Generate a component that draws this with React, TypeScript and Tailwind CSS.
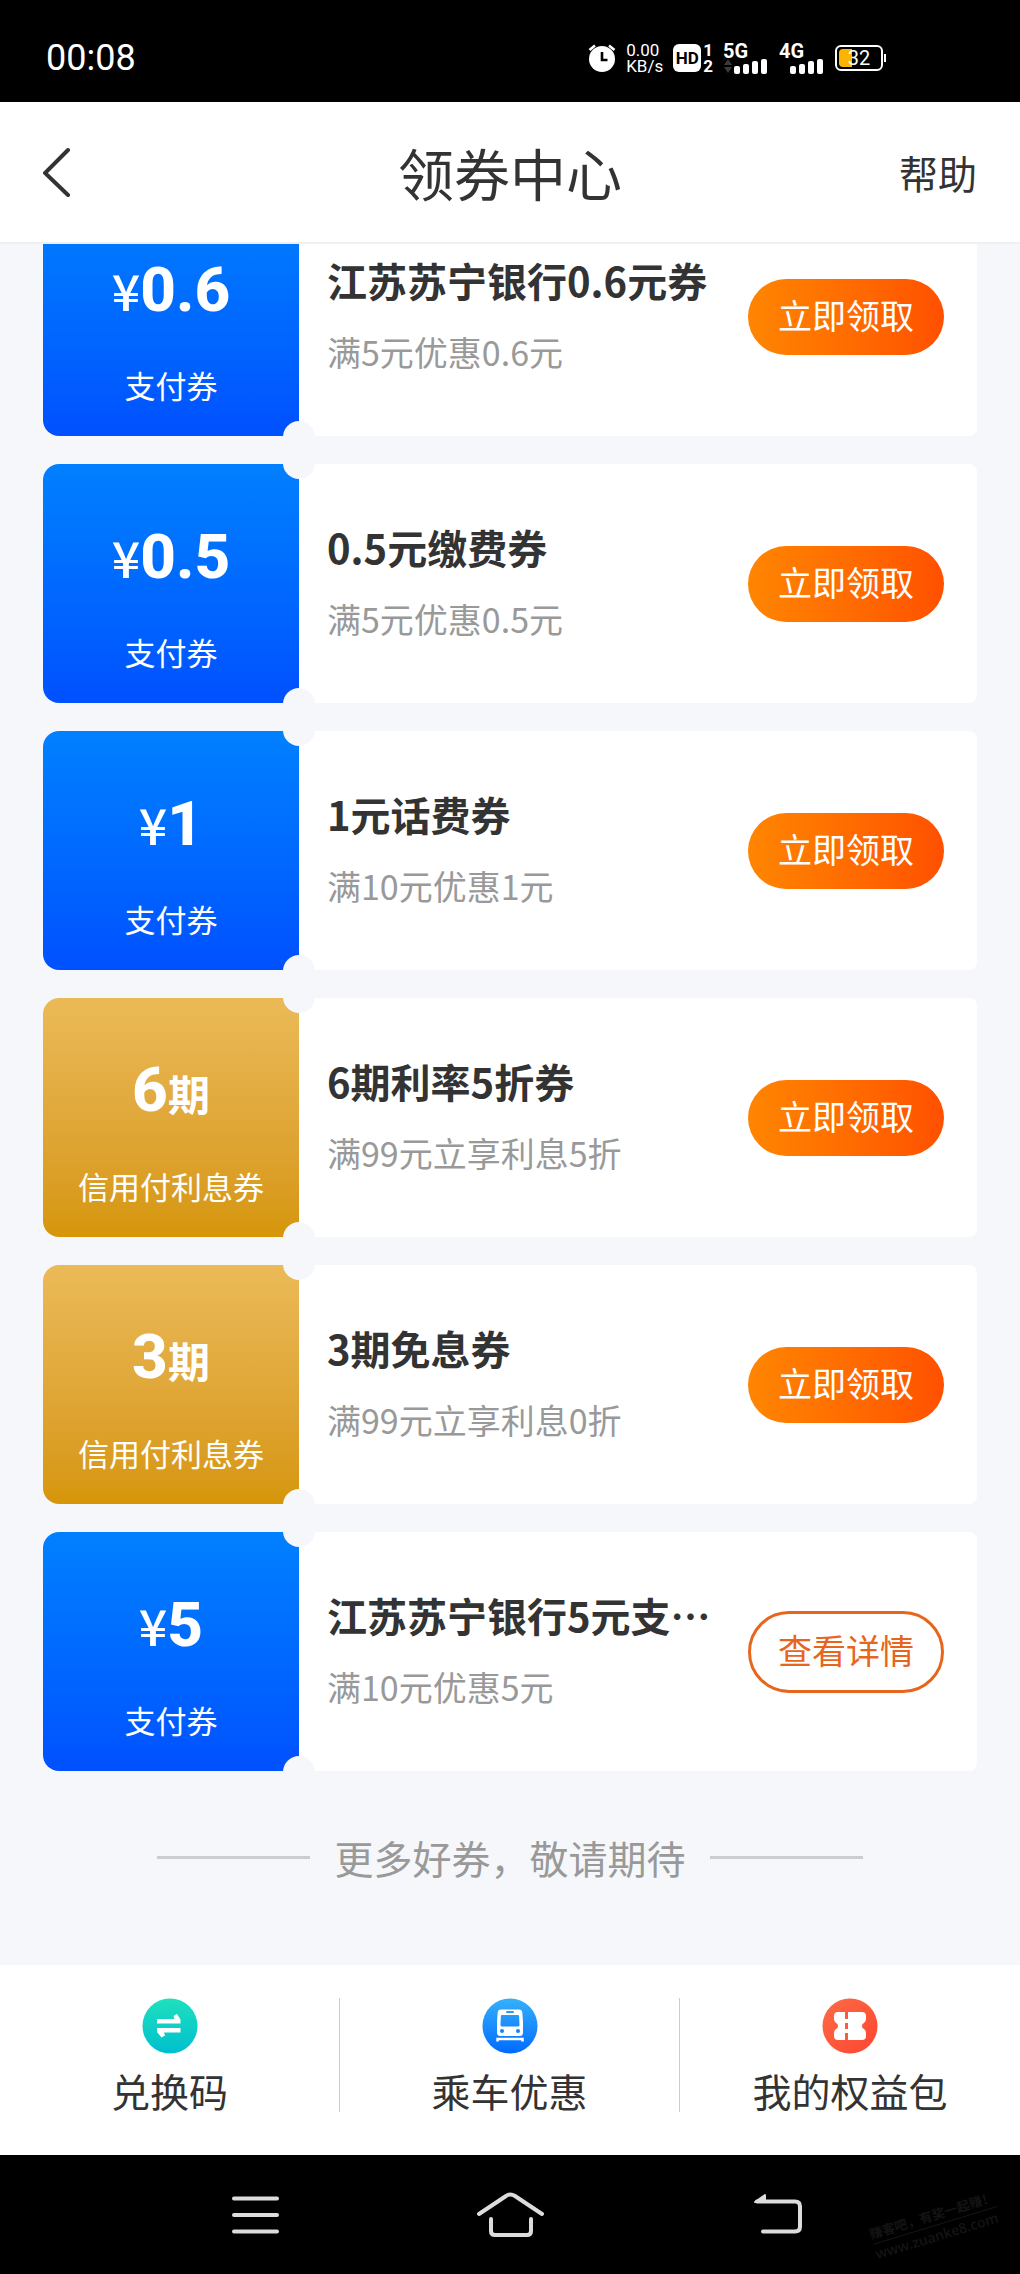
import React from 'react'

type Coupon = {
  id: number
  tone: 'blue' | 'gold'
  value: string
  prefix?: string
  suffix?: string
  kind: string
  title: string
  desc: string
  claimed?: boolean
}

const COUPONS: Coupon[] = [
  { id: 1, tone: 'blue', prefix: '¥', value: '0.6', kind: '支付券', title: '江苏苏宁银行0.6元券', desc: '满5元优惠0.6元' },
  { id: 2, tone: 'blue', prefix: '¥', value: '0.5', kind: '支付券', title: '0.5元缴费券', desc: '满5元优惠0.5元' },
  { id: 3, tone: 'blue', prefix: '¥', value: '1', kind: '支付券', title: '1元话费券', desc: '满10元优惠1元' },
  { id: 4, tone: 'gold', value: '6', suffix: '期', kind: '信用付利息券', title: '6期利率5折券', desc: '满99元立享利息5折' },
  { id: 5, tone: 'gold', value: '3', suffix: '期', kind: '信用付利息券', title: '3期免息券', desc: '满99元立享利息0折' },
  { id: 6, tone: 'blue', prefix: '¥', value: '5', kind: '支付券', title: '江苏苏宁银行5元支付券', desc: '满10元优惠5元', claimed: true },
]

const TONES = {
  blue: 'bg-linear-to-b from-[#0080ff] to-[#0050ff]',
  gold: 'bg-linear-to-b from-[#ebba57] to-[#d69606]',
}

function Signal({ label, data }: { label: string; data?: boolean }) {
  return (
    <div className="flex w-[46px] flex-col">
      <span className="text-[20px] leading-4 font-bold">{label}</span>
      <svg className="h-[15px] w-[46px]" viewBox="0 0 46 15" fill="#fff">
        {data ? <path d="M1 6 5 0l4 6zM1 8h8l-4 6z" fill="#3a3a3a" /> : null}
        <rect x="11" y="7" width="6" height="8" rx="2" />
        <rect x="20" y="5" width="6" height="10" rx="2" />
        <rect x="29" y="2" width="6" height="13" rx="2" />
        <rect x="38" y="0" width="6" height="15" rx="2" />
      </svg>
    </div>
  )
}

function StatusBar() {
  return (
    <div className="flex h-[102px] items-center justify-between bg-black pt-3.5 pr-[134px] pl-[46px] font-['Roboto',sans-serif] text-white">
      <time className="text-[36px] leading-10">00:08</time>
      <div className="flex items-center gap-2.5">
        <svg className="h-7 w-7" viewBox="0 0 28 28" fill="none">
          <circle cx="14" cy="15" r="13" fill="#fff" />
          <path d="M1.500 6 7 1.500M26.500 6 21 1.500" stroke="#fff" strokeWidth="2.600" />
          <path d="M14 8v8h5.500" stroke="#000" strokeWidth="2.600" />
        </svg>
        <div className="flex flex-col text-[17px] leading-4">
          <span>0.00</span>
          <span>KB/s</span>
        </div>
        <div className="flex items-center gap-0.5">
          <span className="flex h-7 w-7 items-center justify-center rounded-md bg-white text-[17px] leading-7 font-bold text-black">HD</span>
          <span className="flex flex-col text-[17px] leading-4 font-bold">
            <span>1</span>
            <span>2</span>
          </span>
        </div>
        <Signal label="5G" data />
        <Signal label="4G" />
        <div className="flex items-center gap-px">
          <div className="relative flex h-[26px] w-12 items-center justify-center rounded-md border-2 border-white">
            <span className="absolute top-0.5 bottom-0.5 left-0.5 w-[13px] rounded-l-sm bg-[#fbb400]" />
            <span className="relative text-[20px] leading-[22px]">32</span>
          </div>
          <span className="h-2 w-0.5 bg-white" />
        </div>
      </div>
    </div>
  )
}

function CouponCard({ coupon }: { coupon: Coupon }) {
  return (
    <li className="relative flex h-[239px] overflow-hidden rounded-l-2xl rounded-r-lg bg-white">
      <div className={`flex w-64 shrink-0 flex-col items-center gap-11 pt-15 text-white ${TONES[coupon.tone]}`}>
        <div className="flex h-16 items-baseline leading-[64px] font-bold">
          {coupon.prefix ? <span className="text-[50px] font-medium">{coupon.prefix}</span> : null}
          <span className="font-['Roboto',sans-serif] text-[62px] font-extrabold">{coupon.value}</span>
          {coupon.suffix ? <span className="text-[42px]">{coupon.suffix}</span> : null}
        </div>
        <span className="text-[31px] leading-10">{coupon.kind}</span>
      </div>
      <span className="absolute -top-[17px] left-60 h-8 w-8 rounded-full bg-[#f5f7fb]" />
      <span className="absolute -bottom-[17px] left-60 h-8 w-8 rounded-full bg-[#f5f7fb]" />
      <div className="flex min-w-0 flex-1 flex-col justify-center gap-5 pr-8 pb-1.5 pl-7">
        <h2 className="truncate text-[40px] leading-[56px] font-bold text-[#333]">{coupon.title}</h2>
        <p className="text-[34px] leading-[48px] text-[#999]">{coupon.desc}</p>
      </div>
      <div className="flex shrink-0 items-center pr-[33px]">
        {coupon.claimed ? (
          <button type="button" className="h-[82px] w-[196px] rounded-full border-3 border-[#e8651c] pb-1 text-[34px] leading-[48px] text-[#e8651c]">
            查看详情
          </button>
        ) : (
          <button type="button" className="h-[76px] w-[196px] rounded-full bg-linear-to-r from-[#ff8500] to-[#ff5000] pb-1 text-[34px] leading-[48px] text-white">
            立即领取
          </button>
        )}
      </div>
    </li>
  )
}

function SwapIcon() {
  return (
    <svg className="h-14 w-14" viewBox="0 0 56 56">
      <defs>
        <linearGradient id="swap" x1="0" y1="0" x2="0" y2="1">
          <stop stopColor="#1fe0bd" />
          <stop offset="1" stopColor="#00bfcf" />
        </linearGradient>
      </defs>
      <circle cx="28" cy="28" r="27.500" fill="url(#swap)" />
      <path d="M15 21h17.500L31.500 18l3.500-2 3.500 5.500v4H15zM38.500 34.500H22l1 3-3.500 2L15 34v-4h23.500z" fill="#fff" />
    </svg>
  )
}

function TrainIcon() {
  return (
    <svg className="h-14 w-14" viewBox="0 0 56 56">
      <defs>
        <linearGradient id="train" x1="0" y1="0" x2="0" y2="1">
          <stop stopColor="#36b0fb" />
          <stop offset="1" stopColor="#006bff" />
        </linearGradient>
      </defs>
      <circle cx="28" cy="28" r="27.500" fill="url(#train)" />
      <path
        d="M19 11.500h18q3 0 3.300 3l.7 9v11q0 3.500-3.500 3.500h-19Q15 38 15 34.500v-11l.7-9q.3-3 3.300-3zM20 17q-1 0-1.100 1L18.500 27q0 1.500 1.500 1.500h16q1.500 0 1.500-1.500L37.100 18q-.1-1-1.100-1z"
        fill="#fff"
        fillRule="evenodd"
      />
      <path d="M25 14h6" stroke="#2a9afd" strokeWidth="2" strokeLinecap="round" />
      <circle cx="20" cy="33" r="2" fill="#1183ff" />
      <circle cx="36" cy="33" r="2" fill="#1183ff" />
      <path d="M15.500 43.500V41h25v2.500" fill="none" stroke="#fff" strokeWidth="2.500" />
    </svg>
  )
}

function TicketIcon() {
  return (
    <svg className="h-14 w-14" viewBox="0 0 56 56">
      <defs>
        <linearGradient id="ticket" x1="0" y1="0" x2="1" y2="1">
          <stop stopColor="#fd6c45" />
          <stop offset="1" stopColor="#fd4531" />
        </linearGradient>
      </defs>
      <circle cx="28" cy="28" r="27.500" fill="url(#ticket)" />
      <path
        d="M16 14h24q4 0 4 4v3q0 2.500-2 4-2 .5-2 3t2 3q2 1.500 2 4v3q0 4-4 4H16q-4 0-4-4v-3q0-2.500 2-4 2-.5 2-3t-2-3q-2-1.500-2-4v-3q0-4 4-4z"
        fill="#fff"
      />
      <path d="M24.500 14v7M24.500 25v6M24.500 35v7" stroke="#fd5a3c" strokeWidth="3" />
    </svg>
  )
}

const TABS = [
  { label: '兑换码', icon: SwapIcon },
  { label: '乘车优惠', icon: TrainIcon },
  { label: '我的权益包', icon: TicketIcon },
]

function SystemNav() {
  return (
    <div className="relative grid h-[119px] grid-cols-3 items-center overflow-hidden bg-black px-32">
      <button type="button" aria-label="最近任务" className="flex justify-center">
        <svg className="h-12 w-[68px]" viewBox="0 0 68 48" stroke="#dcdcdc" strokeWidth="4" strokeLinecap="round">
          <path d="M13 7.500h43M13 24h43M13 40.500h43" />
        </svg>
      </button>
      <button type="button" aria-label="主页" className="flex justify-center">
        <svg className="h-12 w-[68px]" viewBox="0 0 68 48" fill="none" stroke="#dcdcdc" strokeWidth="4" strokeLinecap="round">
          <path d="M3 23 30 5q4-3 9 0l27 18" />
          <path d="M15 28v12q0 4 4 4h32q4 0 4-4V28" />
        </svg>
      </button>
      <button type="button" aria-label="返回" className="flex justify-center">
        <svg className="h-12 w-[80px]" viewBox="0 0 80 48" fill="none" stroke="#dcdcdc" strokeWidth="4" strokeLinecap="round">
          <path d="M32 10.500h38q5 0 5 5v20q0 5-5 5H38" />
          <path d="M30 11 40 4v7z" fill="#dcdcdc" strokeWidth="2" strokeLinejoin="round" />
        </svg>
      </button>
      <div className="absolute right-5 bottom-7 flex -rotate-17 flex-col text-[#141414]">
        <span className="border-b border-[#141414] text-[13px] leading-5 font-bold">赚客吧，有奖一起赚！</span>
        <span className="font-['Open_Sans',sans-serif] text-[14px] leading-5 font-semibold">www.zuanke8.com</span>
      </div>
    </div>
  )
}

export default function App() {
  return (
    <div className="flex min-h-screen flex-col bg-[#f5f7fb] font-['Noto_Sans_CJK_SC',sans-serif] text-[#333]">
      <StatusBar />

      <header className="grid h-[142px] grid-cols-[1fr_auto_1fr] items-center border-b-2 border-[#eef0f2] bg-white px-[43px]">
        <button type="button" aria-label="返回上一页" className="justify-self-start">
          <svg className="h-[50px] w-7" viewBox="0 0 28 50" fill="none" stroke="#333" strokeWidth="4" strokeLinecap="round">
            <path d="M25 3 2 26l23 22" />
          </svg>
        </button>
        <h1 className="text-[56px] leading-[80px]">领券中心</h1>
        <a href="#help" className="justify-self-end text-[39px] leading-[56px]">
          帮助
        </a>
      </header>

      <main className="flex-1 overflow-hidden px-[43px]">
        {/* list is scrolled slightly under the header */}
        <ul className="-mt-[47px] flex flex-col gap-7">
          {COUPONS.map((coupon) => (
            <CouponCard key={coupon.id} coupon={coupon} />
          ))}
        </ul>
        <div className="flex items-center justify-center gap-6 pt-[58px] pb-20">
          <span className="h-[3px] w-[153px] bg-[#cccdd0]" />
          <p className="text-[39px] leading-[56px] text-[#999]">更多好券，敬请期待</p>
          <span className="h-[3px] w-[153px] bg-[#cccdd0]" />
        </div>
      </main>

      <nav className="grid grid-cols-3 bg-white pt-[33px] pb-[43px]">
        {TABS.map(({ label, icon: Icon }) => (
          <a key={label} href="#tab" className="flex h-[114px] flex-col items-center justify-between border-r border-[#ccc] last:border-r-0">
            <Icon />
            <span className="text-[39px] leading-[44px]">{label}</span>
          </a>
        ))}
      </nav>

      <SystemNav />
    </div>
  )
}
